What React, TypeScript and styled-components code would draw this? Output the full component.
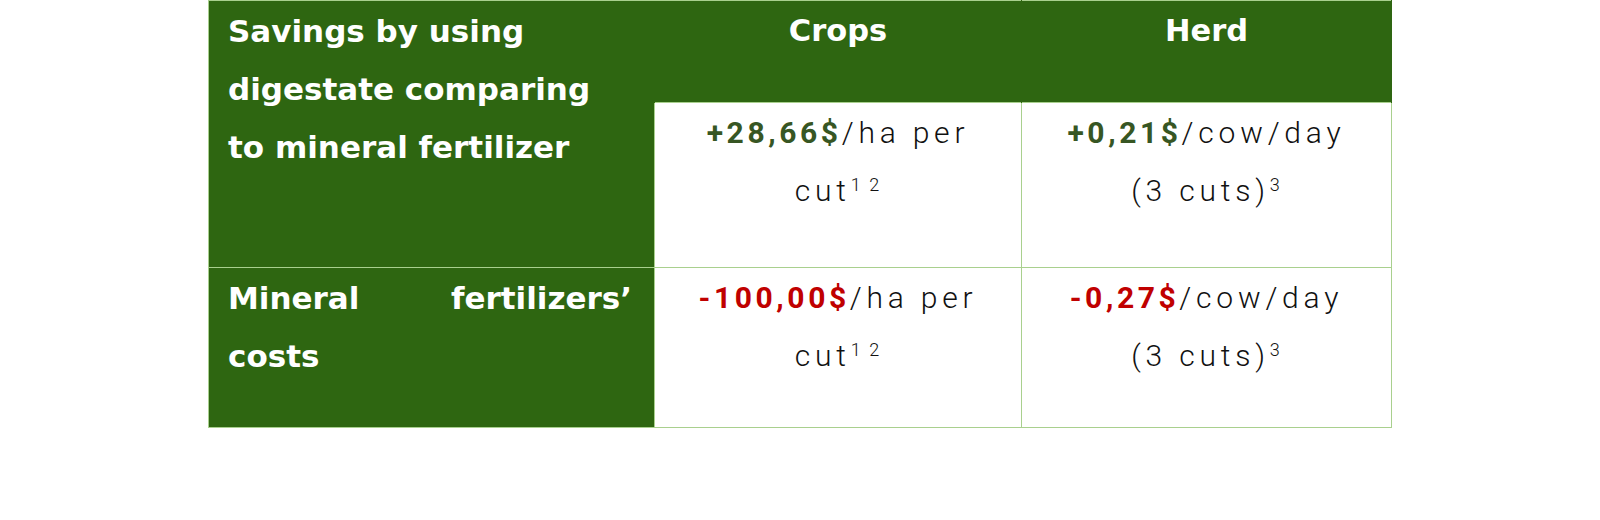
import React from 'react';
import styled, { createGlobalStyle } from 'styled-components';

const GlobalStyle = createGlobalStyle`
  body {
    margin: 0;
    background: #ffffff;
  }
`;

type Value = { amount: string; unit: string; sup: string };

const rows: { label?: string; crops: Value; herd: Value; negative: boolean; height: number }[] = [
  {
    crops: { amount: '+28,66$', unit: '/ha per cut', sup: '1 2' },
    herd: { amount: '+0,21$', unit: '/cow/day (3\u00a0cuts)', sup: '3' },
    negative: false,
    height: 165,
  },
  {
    label: 'Mineral fertilizers’ costs',
    crops: { amount: '-100,00$', unit: '/ha per cut', sup: '1 2' },
    herd: { amount: '-0,27$', unit: '/cow/day (3\u00a0cuts)', sup: '3' },
    negative: true,
    height: 160,
  },
];

const ValueText = ({ value, negative }: { value: Value; negative: boolean }) => (
  <ValueCell>
    <Amount $negative={negative}>{value.amount}</Amount>
    {value.unit}
    <Sup>{value.sup}</Sup>
  </ValueCell>
);

const App = () => {
  return (
    <>
      <GlobalStyle />
      <Root>
        <Table>
          <colgroup>
            <col style={{ width: 446 }} />
            <col style={{ width: 367 }} />
            <col style={{ width: 370 }} />
          </colgroup>
          <tbody>
            <Row $height={102}>
              <LabelCell rowSpan={2}>
                Savings by using digestate comparing to mineral fertilizer
              </LabelCell>
              <HeadCell>Crops</HeadCell>
              <HeadCell>Herd</HeadCell>
            </Row>
            {rows.map((row, i) => (
              <Row key={i} $height={row.height}>
                {row.label && <LabelCell $justify>{row.label}</LabelCell>}
                <ValueText value={row.crops} negative={row.negative} />
                <ValueText value={row.herd} negative={row.negative} />
              </Row>
            ))}
          </tbody>
        </Table>
      </Root>
    </>
  );
};

const Root = styled.section`
  padding-left: 208px;
`;

const Table = styled.table`
  width: 1184px;
  table-layout: fixed;
  border-collapse: collapse;
  border: 1px solid #a9d08e;
`;

const Row = styled.tr<{ $height: number }>`
  height: ${({ $height }) => $height}px;
`;

const LabelCell = styled.td<{ $justify?: boolean }>`
  vertical-align: top;
  padding: 1px 22px 0 19px;

  background-color: #2e6611;
  border: 1px solid #a9d08e;
  border-right: none;

  font-family: 'DejaVu Sans', 'Open Sans', sans-serif;
  font-weight: 700;
  font-size: 31px;
  line-height: 58px;
  color: #ffffff;
  text-align: ${({ $justify }) => ($justify ? 'justify' : 'left')};
`;

const HeadCell = styled.th`
  vertical-align: top;
  padding: 1px 0 0;

  background-color: #2e6611;
  border: 1px solid #2e6611;
  border-top-color: #a9d08e;
  border-bottom: none;

  font-family: 'DejaVu Sans', 'Open Sans', sans-serif;
  font-weight: 700;
  font-size: 30.5px;
  line-height: 58px;
  color: #ffffff;
  text-align: center;
`;

const ValueCell = styled.td`
  vertical-align: top;
  padding: 1px 20px 0;

  background-color: #ffffff;
  border: 1px solid #a9d08e;

  font-family: Roboto, 'Liberation Sans', sans-serif;
  font-weight: 300;
  font-size: 30px;
  line-height: 58px;
  letter-spacing: 4.8px;
  color: #111111;
  text-align: center;
`;

const Amount = styled.span<{ $negative?: boolean }>`
  font-weight: 700;
  letter-spacing: 3.6px;
  color: ${({ $negative }) => ($negative ? '#c00000' : '#375623')};
`;

const Sup = styled.sup`
  font-size: 18px;
  line-height: 0;
  letter-spacing: 2px;
  vertical-align: 10px;
`;

export default App;
